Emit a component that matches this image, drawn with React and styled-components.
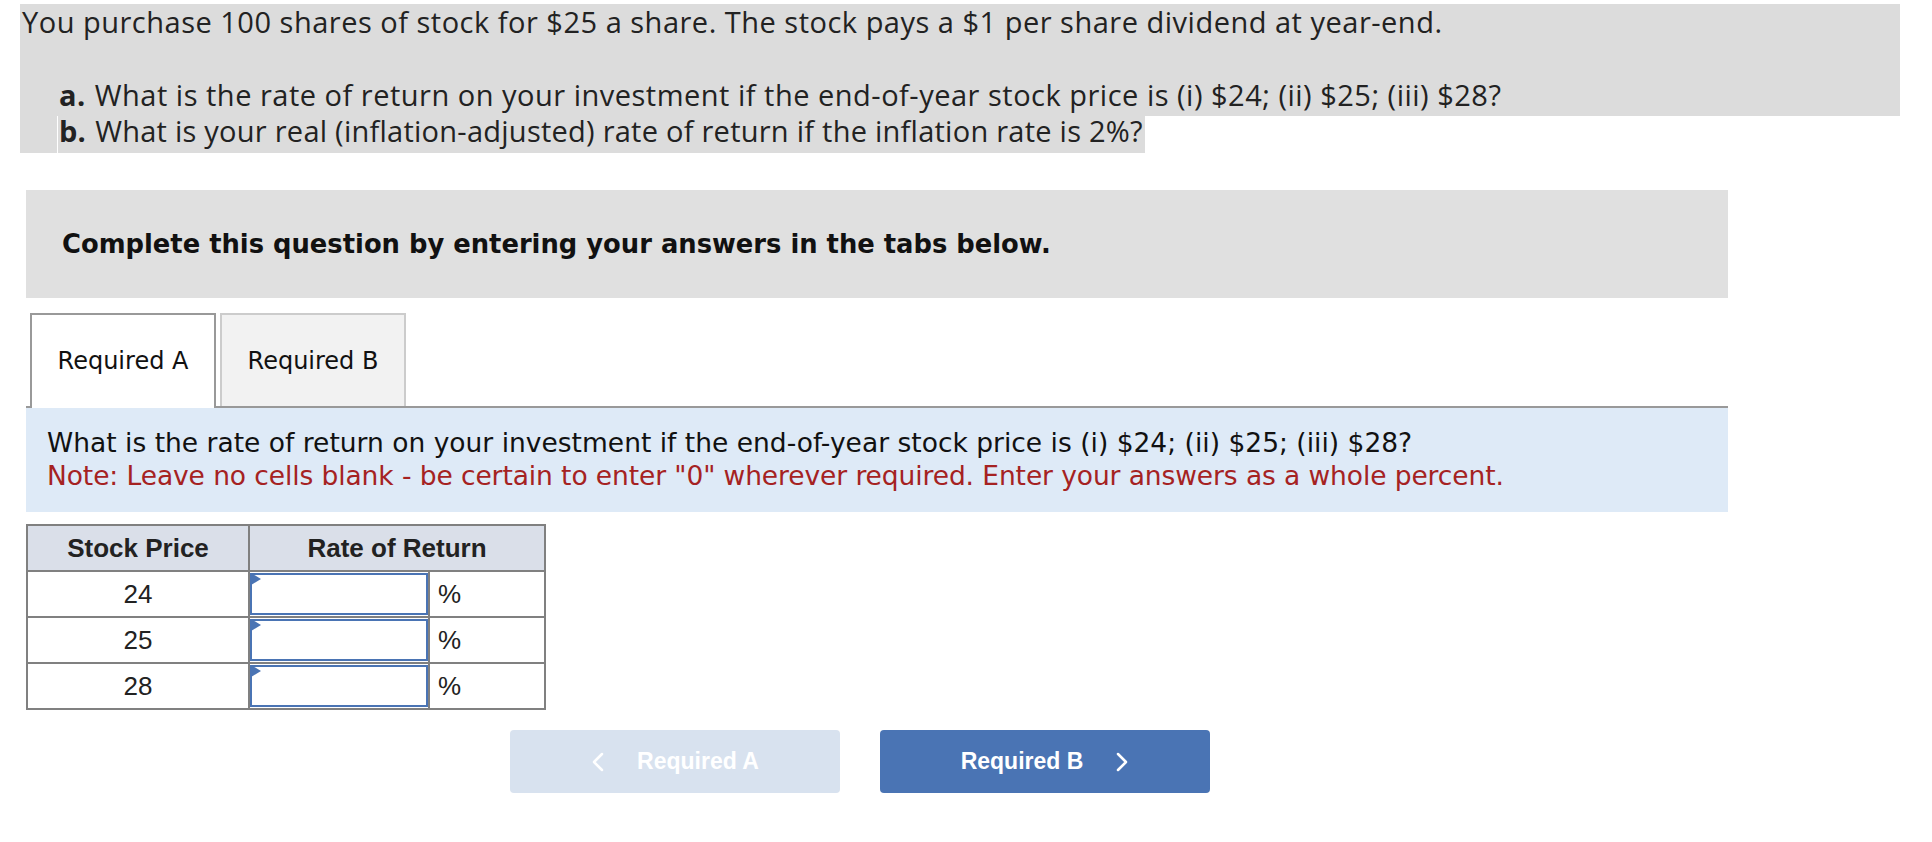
import React from "react";
import styled, { createGlobalStyle } from "styled-components";

const GlobalStyle = createGlobalStyle`
  body {
    margin: 0;
    background: #ffffff;
    font-family: "Liberation Sans", Arial, sans-serif;
  }
`;

const Page = styled.div`
  padding: 4px 0 40px 20px;
`;

const Intro = styled.div`
  width: 1880px;
  background-color: #dcdcdc;
  color: #222;
  font-family: "Open Sans", "Liberation Sans", sans-serif;
  font-size: 29px;
  letter-spacing: 0.5px;
  line-height: 35px;
  padding-bottom: 4px;

  p {
    margin: 0 0 38px 2px;
  }
`;

const Item = styled.div`
  padding-left: 39px;
  b {
    font-weight: 700;
    margin-right: 9px;
  }
`;

const ItemB = styled.div`
  display: inline-flex;
  background-color: #dcdcdc;
  color: #222;
  font-family: "Open Sans", "Liberation Sans", sans-serif;
  font-size: 29px;
  letter-spacing: 0.25px;
  line-height: 29px;

  span {
    padding-left: 37px;
  }
  div {
    border-left: 1px solid #ffffff;
    padding: 0 2px 8px 1px;
  }
  b {
    font-weight: 700;
    margin-right: 9px;
  }
`;

const Main = styled.div`
  width: 1702px;
  margin: 33px 0 0 6px;
`;

const Banner = styled.div`
  height: 108px;
  display: flex;
  align-items: center;
  padding-left: 36px;
  background-color: #e0e0e0;
  font-family: "DejaVu Sans", Verdana, sans-serif;
  font-weight: 700;
  font-size: 25.8px;
  color: #111;
`;

const TabBar = styled.div`
  display: flex;
  gap: 4px;
  margin-top: 15px;
  padding-left: 4px;
  border-bottom: 2px solid #999999;
  height: 93px;
`;

const Tab = styled.div`
  width: 186px;
  box-sizing: border-box;
  display: flex;
  align-items: center;
  justify-content: center;
  font-family: "DejaVu Sans", Verdana, sans-serif;
  font-size: 24px;
  color: #111;
  background-color: ${(p) => (p.$active ? "#ffffff" : "#f2f2f2")};
  border: 2px solid ${(p) => (p.$active ? "#999999" : "#cccccc")};
  border-bottom: 0;
  height: ${(p) => (p.$active ? "95px" : "93px")};
  padding-bottom: ${(p) => (p.$active ? "2px" : "0")};
  position: relative;
  z-index: 1;
`;

const Panel = styled.div`
  background-color: #deeaf7;
  padding: 18px 21px 20px;
  font-family: "DejaVu Sans", Verdana, sans-serif;
  font-size: 26.5px;
  line-height: 33px;
  color: #111;
`;

const Note = styled.div`
  color: #a52222;
  letter-spacing: -0.1px;
`;

const Table = styled.table`
  margin-top: 12px;
  border-collapse: collapse;
  font-family: "Liberation Sans", Arial, sans-serif;
  font-size: 26px;
  color: #222;

  th, td {
    border: 2px solid #808080;
    padding: 0;
  }
  th {
    height: 44px;
    background-color: #dadfe9;
    font-weight: 700;
  }
  td {
    height: 44px;
  }
`;

const PriceCell = styled.td`
  width: 220px;
  text-align: center;
`;

const InputCell = styled.td`
  width: 177px;
  position: relative;
`;

const AnswerInput = styled.input`
  display: block;
  box-sizing: border-box;
  width: 178px;
  height: 42px;
  margin: 0 auto;
  border: 2px solid #4a74b4;
  background: #ffffff;
  outline: none;
`;

const Marker = styled.span`
  position: absolute;
  left: 1px;
  top: 1px;
  width: 0;
  height: 0;
  border-top: 6px solid transparent;
  border-bottom: 6px solid transparent;
  border-left: 10px solid #4a74b4;
`;

const PctCell = styled.td`
  width: 106px;
  padding-left: 8px !important;
`;

const Nav = styled.div`
  display: flex;
  gap: 40px;
  margin: 20px 0 0 484px;
`;

const NavButton = styled.button`
  width: 330px;
  height: 63px;
  border: none;
  border-radius: 4px;
  display: flex;
  align-items: center;
  justify-content: center;
  gap: 32px;
  font-family: "Liberation Sans", Arial, sans-serif;
  font-weight: 700;
  font-size: 23px;
  color: #ffffff;
  background-color: ${(p) => (p.$disabled ? "#d8e2ef" : "#4a74b4")};
  cursor: ${(p) => (p.$disabled ? "default" : "pointer")};
`;

const Chevron = ({ dir }) => (
  <svg width="14" height="20" viewBox="0 0 14 20" fill="none">
    <polyline
      points={dir === "left" ? "11,2 3,10 11,18" : "3,2 11,10 3,18"}
      stroke="#ffffff"
      strokeWidth="2.5"
      strokeLinecap="round"
      strokeLinejoin="round"
    />
  </svg>
);

const rows = [24, 25, 28];

export default function App() {
  return (
    <Page>
      <GlobalStyle />
      <Intro>
        <p>
          You purchase 100 shares of stock for $25 a share. The stock pays a $1
          per share dividend at year-end.
        </p>
        <Item>
          <b>a.</b>What is the rate of return on your investment if the
          end-of-year stock price is (i) $24; (ii) $25; (iii) $28?
        </Item>
      </Intro>
      <ItemB>
        <span />
        <div>
          <b>b.</b>What is your real (inflation-adjusted) rate of return if the
          inflation rate is 2%?
        </div>
      </ItemB>

      <Main>
        <Banner>Complete this question by entering your answers in the tabs below.</Banner>
        <TabBar>
          <Tab $active>Required A</Tab>
          <Tab>Required B</Tab>
        </TabBar>
        <Panel>
          <div>
            What is the rate of return on your investment if the end-of-year
            stock price is (i) $24; (ii) $25; (iii) $28?
          </div>
          <Note>
            Note: Leave no cells blank - be certain to enter "0" wherever
            required. Enter your answers as a whole percent.
          </Note>
        </Panel>

        <Table>
          <thead>
            <tr>
              <th>Stock Price</th>
              <th colSpan={2}>Rate of Return</th>
            </tr>
          </thead>
          <tbody>
            {rows.map((price) => (
              <tr key={price}>
                <PriceCell>{price}</PriceCell>
                <InputCell>
                  <Marker />
                  <AnswerInput type="text" aria-label={`Rate of return at ${price}`} />
                </InputCell>
                <PctCell>%</PctCell>
              </tr>
            ))}
          </tbody>
        </Table>

        <Nav>
          <NavButton $disabled>
            <Chevron dir="left" />
            Required A
          </NavButton>
          <NavButton>
            Required B
            <Chevron dir="right" />
          </NavButton>
        </Nav>
      </Main>
    </Page>
  );
}
